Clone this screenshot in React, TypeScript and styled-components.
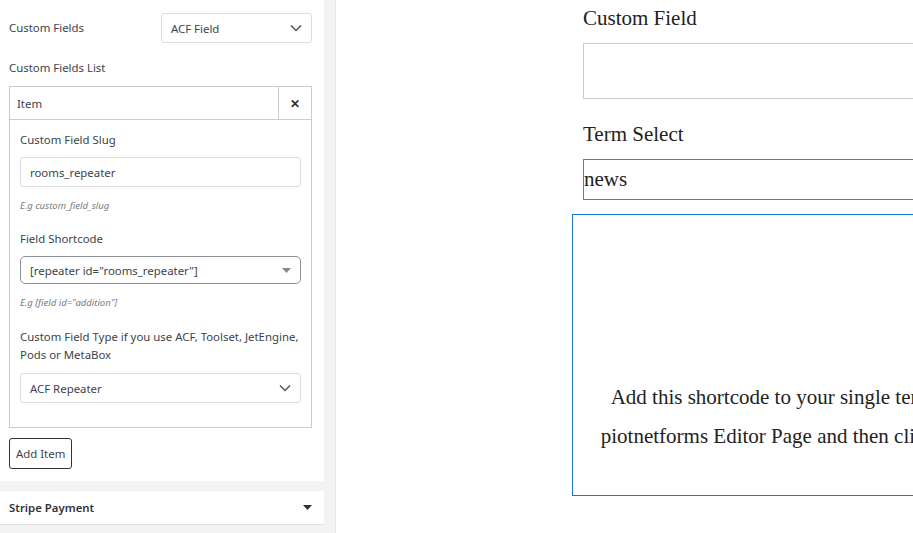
import React from "react";
import styled, { createGlobalStyle } from "styled-components";

const GlobalStyle = createGlobalStyle`
  html, body {
    margin: 0;
    padding: 0;
    overflow: hidden;
    background: #fff;
  }
  * {
    box-sizing: border-box;
  }
`;

const ChevronDown = () => (
  <svg width="12" height="8" viewBox="0 0 12 8" fill="none">
    <path d="M1 1.5L6 6.5L11 1.5" stroke="#555" strokeWidth="1.5" />
  </svg>
);

const Caret = ({ color = "#888" }: { color?: string }) => (
  <svg width="9" height="5" viewBox="0 0 9 5">
    <path d="M0 0H9L4.5 5Z" fill={color} />
  </svg>
);

const App: React.FC = () => {
  return (
    <Page>
      <GlobalStyle />
      <Sidebar>
        <Panel>
          <InlineRow>
            <Label>Custom Fields</Label>
            <SelectBox width="151px" height="30px" top="0">
              <span>ACF Field</span>
              <ChevronDown />
            </SelectBox>
          </InlineRow>
          <ListLabel>Custom Fields List</ListLabel>
          <Repeater>
            <RepeaterHead>
              <span className="title">Item</span>
              <span className="close">✕</span>
            </RepeaterHead>
            <RepeaterBody>
              <Label>Custom Field Slug</Label>
              <TextInput>rooms_repeater</TextInput>
              <Hint>E.g custom_field_slug</Hint>
              <Label top="17px">Field Shortcode</Label>
              <SelectBox height="28px" radius="5px" border="#8c8f94">
                <span>[repeater id="rooms_repeater"]</span>
                <Caret />
              </SelectBox>
              <Hint>E.g [field id="addition"]</Hint>
              <Label top="18px">
                Custom Field Type if you use ACF, Toolset, JetEngine, Pods or
                MetaBox
              </Label>
              <SelectBox height="30px" top="9px">
                <span>ACF Repeater</span>
                <ChevronDown />
              </SelectBox>
            </RepeaterBody>
          </Repeater>
          <AddButton>Add Item</AddButton>
        </Panel>
        <Section>
          <span>Stripe Payment</span>
          <Caret color="#333" />
        </Section>
      </Sidebar>
      <Canvas>
        <Form>
          <FieldLabel>Custom Field</FieldLabel>
          <FieldInput />
          <FieldLabel top="22px">Term Select</FieldLabel>
          <TermSelect>news</TermSelect>
        </Form>
        <ShortcodeBox>
          Add this shortcode to your single template and paste it into the
          <br />
          piotnetforms Editor Page and then click the Update button below
        </ShortcodeBox>
      </Canvas>
    </Page>
  );
};

const Page = styled.div`
  display: flex;
  width: 913px;
  height: 533px;
  overflow: hidden;
`;

const Sidebar = styled.div`
  width: 336px;
  flex-shrink: 0;
  background: #f3f3f3;
  border-right: 1px solid #e6e6e6;
  padding-right: 11px;
  font-family: "Noto Sans", "Open Sans", sans-serif;
  font-size: 11.4px;
  color: #3c434a;
`;

const Panel = styled.div`
  background: #fff;
  padding: 13px 12px 12px 9px;
`;

const InlineRow = styled.div`
  display: flex;
  align-items: center;
  justify-content: space-between;
`;

const Label = styled.div<{ top?: string }>`
  line-height: 18px;
  margin-top: ${(p) => p.top || "0"};
`;

const ListLabel = styled.div`
  line-height: 16px;
  margin: 17px 0 10px;
`;

const SelectBox = styled.div<{
  width?: string;
  height: string;
  top?: string;
  radius?: string;
  border?: string;
}>`
  display: flex;
  align-items: center;
  justify-content: space-between;
  width: ${(p) => p.width || "100%"};
  height: ${(p) => p.height};
  margin-top: ${(p) => p.top || "8px"};
  padding: 0 9px 0 9px;
  border: 1px solid ${(p) => p.border || "#dcdcde"};
  border-radius: ${(p) => p.radius || "3px"};
  background: #fff;
  color: #3c434a;
  span {
    white-space: nowrap;
  }
`;

const Repeater = styled.div`
  border: 1px solid #ccc;
`;

const RepeaterHead = styled.div`
  display: flex;
  height: 33px;
  border-bottom: 1px solid #ccc;
  .title {
    flex: 1;
    display: flex;
    align-items: center;
    padding-left: 7px;
  }
  .close {
    width: 33px;
    border-left: 1px solid #ccc;
    display: flex;
    align-items: center;
    justify-content: center;
    font-weight: 700;
    font-size: 12px;
    color: #333;
  }
`;

const RepeaterBody = styled.div`
  padding: 11px 10px 24px 10px;
`;

const TextInput = styled.div`
  height: 30px;
  margin-top: 8px;
  padding: 0 9px;
  display: flex;
  align-items: center;
  border: 1px solid #dcdcde;
  border-radius: 3px;
`;

const Hint = styled.div`
  font-size: 9.5px;
  font-style: italic;
  color: #787c82;
  line-height: 14px;
  margin-top: 12px;
`;

const AddButton = styled.button`
  display: block;
  margin-top: 10px;
  height: 31px;
  padding: 0 6px;
  font-family: inherit;
  font-size: 11.4px;
  color: #3c434a;
  background: #fff;
  border: 1px solid #333;
  border-radius: 3px;
`;

const Section = styled.div`
  margin-top: 10px;
  height: 34px;
  display: flex;
  align-items: center;
  justify-content: space-between;
  padding: 0 12px 0 9px;
  background: #fff;
  border-bottom: 1px solid #e2e2e2;
  font-weight: 600;
  color: #333;
`;

const Canvas = styled.div`
  flex: 1;
  overflow: hidden;
  background: #fff;
  padding-left: 236px;
  font-family: "Liberation Serif", "DejaVu Serif", serif;
  color: #222;
`;

const Form = styled.div`
  width: 700px;
  padding: 5px 0 0 11px;
`;

const FieldLabel = styled.div<{ top?: string }>`
  font-size: 21px;
  line-height: 26px;
  margin-top: ${(p) => p.top || "0"};
`;

const FieldInput = styled.div`
  height: 56px;
  margin-top: 12px;
  border: 1px solid #ccc;
`;

const TermSelect = styled.div`
  height: 41px;
  margin-top: 12px;
  border: 1px solid #767676;
  font-size: 21px;
  line-height: 39px;
`;

const ShortcodeBox = styled.div`
  width: 604px;
  height: 282px;
  margin-top: 14px;
  border: 1px solid #1a73e8;
  padding-top: 163px;
  text-align: center;
  font-size: 21px;
  line-height: 39px;
  white-space: nowrap;
`;

export default App;
